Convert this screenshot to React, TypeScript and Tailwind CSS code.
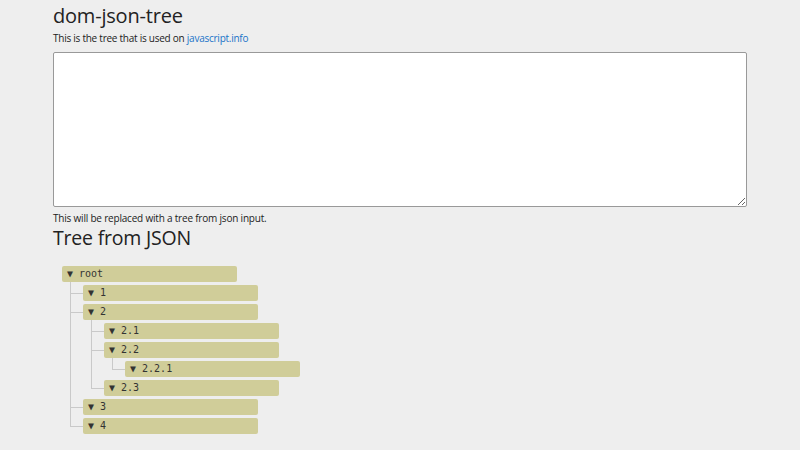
type Node = { label: string; children?: Node[] }

const tree: Node = {
  label: "root",
  children: [
    { label: "1" },
    {
      label: "2",
      children: [
        { label: "2.1" },
        { label: "2.2", children: [{ label: "2.2.1" }] },
        { label: "2.3" },
      ],
    },
    { label: "3" },
    { label: "4" },
  ],
}

const TreeNode = ({ node }: { node: Node }) => {
  const kids = node.children || []
  return (
    <div>
      <div className="w-[175px] h-[16px] rounded-[2px] bg-[#d0cd99] pl-[5px] flex items-center text-[10px] text-[#333] font-['DejaVu_Sans_Mono',monospace] leading-none">
        ▼ {node.label}
      </div>
      {kids.length > 0 && (
        <div className="ml-[8px]">
          {kids.map((k, i) => (
            <div key={k.label} className="relative pl-[13px] pt-[3px]">
              <div
                className={
                  "absolute left-0 top-0 w-px bg-[#c9c9c9] " +
                  (i === kids.length - 1 ? "h-[11px]" : "bottom-0")
                }
              />
              <div className="absolute left-0 top-[11px] w-[13px] h-px bg-[#c9c9c9]" />
              <TreeNode node={k} />
            </div>
          ))}
        </div>
      )}
    </div>
  )
}

export default function App() {
  return (
    <div className="min-h-[450px] bg-[#eeeeee] text-[#222] font-['Open_Sans',sans-serif] px-[53px]">
      <h1 className="text-[20px] leading-none pt-[6px] tracking-[-0.2px]">dom-json-tree</h1>
      <p className="text-[10px] mt-[7px] leading-none tracking-[-0.25px]">
        This is the tree that is used on <a className="text-[#1a73c8]">javascript.info</a>
      </p>
      <textarea className="block w-full h-[155px] mt-[9px] bg-white border border-[#999] rounded-[2px]" />
      <p className="text-[10px] mt-[6px] leading-none tracking-[-0.2px]">This will be replaced with a tree from json input.</p>
      <h2 className="text-[19.5px] leading-none mt-[5px] tracking-[-0.2px]">Tree from JSON</h2>
      <div className="mt-[18px] ml-[9px]">
        <TreeNode node={tree} />
      </div>
    </div>
  )
}
